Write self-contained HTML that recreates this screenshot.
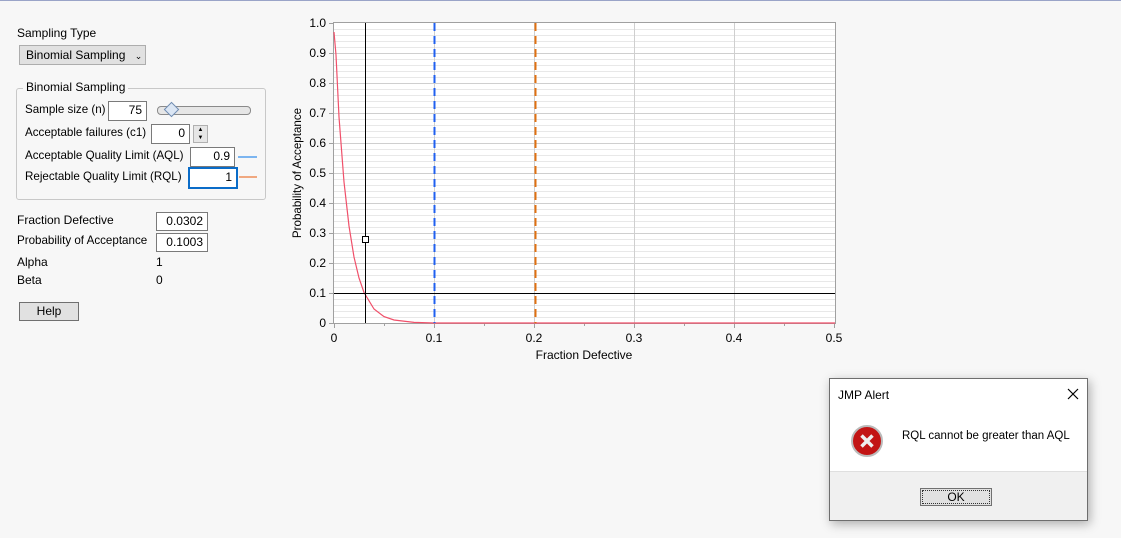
<!DOCTYPE html>
<html><head><style>
body{margin:0;width:1121px;height:538px;background:#f7f7f7;font-family:"Liberation Sans",sans-serif;font-size:12px;color:#000;position:relative;overflow:hidden}
.a{position:absolute;white-space:nowrap}
.box{position:absolute;background:#fff;border:1px solid #7a7a7a;text-align:right;box-sizing:border-box;padding-right:4px;line-height:17px}
</style></head><body>
<div style="position:absolute;left:0;top:0;width:1121px;height:1px;background:#9aa4c8"></div>
<div class="a" style="left:17px;top:26px">Sampling Type</div>
<div class="a" style="left:19px;top:45px;width:127px;height:20px;background:#e1e1e1;border:1px solid #adadad;box-sizing:border-box;line-height:18px;padding-left:6px">Binomial Sampling <span style="font-size:9px;margin-left:6px">&#8964;</span></div>
<div style="position:absolute;left:16px;top:88px;width:250px;height:112px;border:1px solid #c8c8c8;border-radius:3px;box-sizing:border-box"></div>
<div class="a" style="left:23px;top:80px;background:#f7f7f7;padding:0 3px">Binomial Sampling</div>
<div class="a" style="left:25px;top:103px;font-size:11.6px">Sample size (n)</div>
<div class="box" style="left:108px;top:101px;width:39px;height:20px">75</div>
<div style="position:absolute;left:157px;top:106px;width:92px;height:7px;border:1px solid #8a8a8a;border-radius:4px;background:#e6e6e6"></div>
<div style="position:absolute;left:166px;top:104px;width:9px;height:9px;background:#dbe6f4;border:1px solid #6f8bb0;transform:rotate(45deg)"></div>
<div class="a" style="left:25px;top:126px;font-size:11.6px">Acceptable failures (c1)</div>
<div class="box" style="left:151px;top:124px;width:39px;height:20px">0</div>
<div style="position:absolute;left:193px;top:125px;width:13px;height:16px;background:#e6e6e6;border:1px solid #b0b0b0;font-size:6px;line-height:8px;text-align:center">▲<br>▼</div>
<div class="a" style="left:25px;top:149px;font-size:11.6px">Acceptable Quality Limit (AQL)</div>
<div class="box" style="left:190px;top:147px;width:45px;height:20px">0.9</div>
<div style="position:absolute;left:238px;top:156px;width:19px;height:2px;background:#7cb5f0"></div>
<div class="a" style="left:25px;top:170px;font-size:11.6px">Rejectable Quality Limit (RQL)</div>
<div class="box" style="left:188px;top:167px;width:50px;height:22px;border:2px solid #0a6cc8">1</div>
<div style="position:absolute;left:239px;top:176px;width:18px;height:2px;background:#f0a880"></div>
<div class="a" style="left:17px;top:213px">Fraction Defective</div>
<div class="box" style="left:156px;top:212px;width:52px;height:19px">0.0302</div>
<div class="a" style="left:17px;top:234px;font-size:11.6px">Probability of Acceptance</div>
<div class="box" style="left:156px;top:233px;width:52px;height:19px">0.1003</div>
<div class="a" style="left:17px;top:255px">Alpha</div><div class="a" style="left:156px;top:255px">1</div>
<div class="a" style="left:17px;top:273px">Beta</div><div class="a" style="left:156px;top:273px">0</div>
<div class="a" style="left:19px;top:302px;width:60px;height:19px;background:#e1e1e1;border:1px solid #707070;box-sizing:border-box;text-align:center;line-height:17px">Help</div>

<svg style="position:absolute;left:0;top:0" width="1121" height="538" font-family="Liberation Sans" font-size="12">
<rect x="334" y="23" width="501" height="300" fill="#fff"/>
<g stroke="#e8e8e8" stroke-width="1">
<path d="M334 29.5H835M334 35.5H835M334 41.5H835M334 47.5H835M334 59.5H835M334 65.5H835M334 71.5H835M334 77.5H835M334 89.5H835M334 95.5H835M334 101.5H835M334 107.5H835M334 119.5H835M334 125.5H835M334 131.5H835M334 137.5H835M334 149.5H835M334 155.5H835M334 161.5H835M334 167.5H835M334 179.5H835M334 185.5H835M334 191.5H835M334 197.5H835M334 209.5H835M334 215.5H835M334 221.5H835M334 227.5H835M334 239.5H835M334 245.5H835M334 251.5H835M334 257.5H835M334 269.5H835M334 275.5H835M334 281.5H835M334 287.5H835M334 299.5H835M334 305.5H835M334 311.5H835M334 317.5H835"/>
</g>
<g stroke="#cfcfcf"><path d="M334 53.5H835M334 83.5H835M334 113.5H835M334 143.5H835M334 173.5H835M334 203.5H835M334 233.5H835M334 263.5H835M334 293.5H835M434.5 23V323M534.5 23V323M634.5 23V323M734.5 23V323"/></g>
<rect x="333.5" y="22.5" width="502" height="301" fill="none" stroke="#a0a0a0"/>
<g stroke="#a0a0a0"><path d="M329 23.5H334M329 53.5H334M329 83.5H334M329 113.5H334M329 143.5H334M329 173.5H334M329 203.5H334M329 233.5H334M329 263.5H334M329 293.5H334M329 323.5H334M334.5 323V328M434.5 323V328M534.5 323V328M634.5 323V328M734.5 323V328M834.5 323V328M384.5 323V326M484.5 323V326M584.5 323V326M684.5 323V326M784.5 323V326"/></g>
<polyline fill="none" stroke="#f0506a" stroke-width="1.2" points="334,32 336,55 339,117 344,182 349,226 354,257 359,278 364,292.5 374,309 384,316.6 394,320 414,322.4 434,323 835,323"/>
<line x1="434.5" y1="23" x2="434.5" y2="323" stroke="#2060f0" stroke-width="2" stroke-dasharray="8,5"/>
<line x1="535.5" y1="23" x2="535.5" y2="323" stroke="#e07010" stroke-width="2" stroke-dasharray="8,5"/>
<line x1="365.5" y1="23" x2="365.5" y2="323" stroke="#000"/>
<line x1="334" y1="293.5" x2="835" y2="293.5" stroke="#000"/>
<rect x="362.5" y="236.5" width="6" height="6" fill="#fff" stroke="#000"/>
<g text-anchor="end"><text x="326" y="27">1.0</text><text x="326" y="57">0.9</text><text x="326" y="87">0.8</text><text x="326" y="117">0.7</text><text x="326" y="147">0.6</text><text x="326" y="177">0.5</text><text x="326" y="207">0.4</text><text x="326" y="237">0.3</text><text x="326" y="267">0.2</text><text x="326" y="297">0.1</text><text x="326" y="327">0</text></g>
<g text-anchor="middle"><text x="334" y="342">0</text><text x="434" y="342">0.1</text><text x="534" y="342">0.2</text><text x="634" y="342">0.3</text><text x="734" y="342">0.4</text><text x="834" y="342">0.5</text><text x="584" y="359">Fraction Defective</text>
<text transform="translate(301,173) rotate(-90)" font-size="11.6">Probability of Acceptance</text></g>
</svg>

<div style="position:absolute;left:829px;top:378px;width:259px;height:143px;border:1px solid #6e6e6e;background:#f0f0f0;box-shadow:2px 3px 10px rgba(0,0,0,.3);box-sizing:border-box">
<div style="position:absolute;left:0;top:0;width:257px;height:92px;background:#fff;border-bottom:1px solid #dfdfdf"></div>
<div class="a" style="left:8px;top:9px">JMP Alert</div>
<svg style="position:absolute;left:237px;top:9px" width="12" height="12"><path d="M1 1L11 11M11 1L1 11" stroke="#000" stroke-width="1.2"/></svg>
<svg style="position:absolute;left:20px;top:45px" width="34" height="34"><circle cx="17" cy="17" r="15" fill="#c21414" stroke="#bbb" stroke-width="2"/><path d="M11.5 11.5L22.5 22.5M22.5 11.5L11.5 22.5" stroke="#eee" stroke-width="3.5"/></svg>
<div class="a" style="left:72px;top:51px;font-size:11.5px">RQL cannot be greater than AQL</div>
<div style="position:absolute;left:90px;top:109px;width:72px;height:18px;background:#e1e1e1;border:1px solid #707070;box-sizing:border-box;text-align:center;line-height:16px;outline:1px dotted #333;outline-offset:-3px">OK</div>
</div>
</body></html>
